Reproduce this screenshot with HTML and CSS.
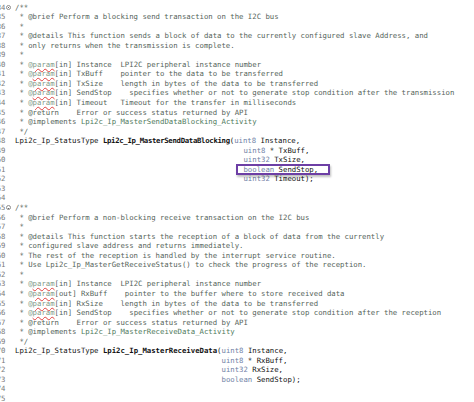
FILE: index.html
```html
<!DOCTYPE html>
<html>
<head>
<meta charset="utf-8">
<link rel="stylesheet" href="styles.css">
</head>
<body>
<div class="editor">
<div class="row"><span class="num">33</span><span class="fold"></span><span class="code"></span></div>
<div class="row"><span class="num">34</span><span class="fold"><i class="fm"></i></span><span class="code cm">/**</span></div>
<div class="row"><span class="num">35</span><span class="fold"></span><span class="code cm"> * <b class="tg">@brief</b> Perform a blocking send transaction on the I2C bus</span></div>
<div class="row"><span class="num">36</span><span class="fold"></span><span class="code cm"> *</span></div>
<div class="row"><span class="num">37</span><span class="fold"></span><span class="code cm"> * <b class="tg">@details</b> This function sends a block of data to the currently configured slave Address, and</span></div>
<div class="row"><span class="num">38</span><span class="fold"></span><span class="code cm"> * only returns when the transmission is complete.</span></div>
<div class="row"><span class="num">39</span><span class="fold"></span><span class="code cm"> *</span></div>
<div class="row"><span class="num">40</span><span class="fold"></span><span class="code cm"> * <b class="pt">@<u class="sp">param</u></b>[in] Instance  LPI2C peripheral instance number</span></div>
<div class="row"><span class="num">41</span><span class="fold"></span><span class="code cm"> * <b class="pt">@<u class="sp">param</u></b>[in] TxBuff    pointer to the data to be transferred</span></div>
<div class="row"><span class="num">42</span><span class="fold"></span><span class="code cm"> * <b class="pt">@<u class="sp">param</u></b>[in] TxSize    length in bytes of the data to be transferred</span></div>
<div class="row"><span class="num">43</span><span class="fold"></span><span class="code cm"> * <b class="pt">@<u class="sp">param</u></b>[in] SendStop    specifies whether or not to generate stop condition after the transmission</span></div>
<div class="row"><span class="num">44</span><span class="fold"></span><span class="code cm"> * <b class="pt">@<u class="sp">param</u></b>[in] Timeout   Timeout for the transfer in milliseconds</span></div>
<div class="row"><span class="num">45</span><span class="fold"></span><span class="code cm"> * <b class="tg">@return</b>    Error or success status returned by API</span></div>
<div class="row"><span class="num">46</span><span class="fold"></span><span class="code cm"> * <b class="tg">@implements</b> <span class="im">Lpi2c_Ip_MasterSendDataBlocking_Activity</span></span></div>
<div class="row"><span class="num">47</span><span class="fold"></span><span class="code cm"> */</span></div>
<div class="row"><span class="num">48</span><span class="fold"></span><span class="code">Lpi2c_Ip_StatusType <b class="fn tight">Lpi2c_Ip_MasterSendDataBlocking</b>(<span class="ty">uint8</span> Instance,</span></div>
<div class="row"><span class="num">49</span><span class="fold"></span><span class="code">                                                    <span class="ty">uint8</span> * TxBuff,</span></div>
<div class="row"><span class="num">50</span><span class="fold"></span><span class="code">                                                    <span class="ty">uint32</span> TxSize,</span></div>
<div class="row"><span class="num">51</span><span class="fold"></span><span class="code">                                                    <span class="hl"><span class="ty">boolean</span> SendStop,</span></span></div>
<div class="row"><span class="num">52</span><span class="fold"></span><span class="code">                                                    <span class="ty">uint32</span> Timeout);</span></div>
<div class="row"><span class="num">53</span><span class="fold"></span><span class="code"></span></div>
<div class="row"><span class="num">54</span><span class="fold"></span><span class="code"></span></div>
<div class="row"><span class="num">55</span><span class="fold"><i class="fm"></i></span><span class="code cm">/**</span></div>
<div class="row"><span class="num">56</span><span class="fold"></span><span class="code cm"> * <b class="tg">@brief</b> Perform a non-blocking receive transaction on the I2C bus</span></div>
<div class="row"><span class="num">57</span><span class="fold"></span><span class="code cm"> *</span></div>
<div class="row"><span class="num">58</span><span class="fold"></span><span class="code cm"> * <b class="tg">@details</b> This function starts the reception of a block of data from the currently</span></div>
<div class="row"><span class="num">59</span><span class="fold"></span><span class="code cm"> * configured slave address and returns immediately.</span></div>
<div class="row"><span class="num">60</span><span class="fold"></span><span class="code cm"> * The rest of the reception is handled by the interrupt service routine.</span></div>
<div class="row"><span class="num">61</span><span class="fold"></span><span class="code cm"> * Use Lpi2c_Ip_MasterGetReceiveStatus() to check the progress of the reception.</span></div>
<div class="row"><span class="num">62</span><span class="fold"></span><span class="code cm"> *</span></div>
<div class="row"><span class="num">63</span><span class="fold"></span><span class="code cm"> * <b class="pt">@<u class="sp">param</u></b>[in] Instance  LPI2C peripheral instance number</span></div>
<div class="row"><span class="num">64</span><span class="fold"></span><span class="code cm"> * <b class="pt">@<u class="sp">param</u></b>[out] RxBuff    pointer to the buffer where to store received data</span></div>
<div class="row"><span class="num">65</span><span class="fold"></span><span class="code cm"> * <b class="pt">@<u class="sp">param</u></b>[in] RxSize    length in bytes of the data to be transferred</span></div>
<div class="row"><span class="num">66</span><span class="fold"></span><span class="code cm"> * <b class="pt">@<u class="sp">param</u></b>[in] SendStop    specifies whether or not to generate stop condition after the reception</span></div>
<div class="row"><span class="num">67</span><span class="fold"></span><span class="code cm"> * <b class="tg">@return</b>    Error or success status returned by API</span></div>
<div class="row"><span class="num">68</span><span class="fold"></span><span class="code cm"> * <b class="tg">@implements</b> <span class="im">Lpi2c_Ip_MasterReceiveData_Activity</span></span></div>
<div class="row"><span class="num">69</span><span class="fold"></span><span class="code cm"> */</span></div>
<div class="row"><span class="num">70</span><span class="fold"></span><span class="code">Lpi2c_Ip_StatusType <b class="fn">Lpi2c_Ip_MasterReceiveData</b>(<span class="ty">uint8</span> Instance,</span></div>
<div class="row"><span class="num">71</span><span class="fold"></span><span class="code">                                               <span class="ty">uint8</span> * RxBuff,</span></div>
<div class="row"><span class="num">72</span><span class="fold"></span><span class="code">                                               <span class="ty">uint32</span> RxSize,</span></div>
<div class="row"><span class="num">73</span><span class="fold"></span><span class="code">                                               <span class="ty">boolean</span> SendStop);</span></div>
<div class="row"><span class="num">74</span><span class="fold"></span><span class="code"></span></div>
<div class="row"><span class="num">75</span><span class="fold"></span><span class="code"></span></div>
</div>
</body>
</html>
```

FILE: styles.css
```css
html, body {
  margin: 0;
  padding: 0;
  background: #ffffff;
}
body {
  width: 474px;
  height: 402px;
  overflow: hidden;
}
.editor {
  margin-top: -7px;
  font-family: "DejaVu Sans Mono", "Liberation Mono", monospace;
  font-size: 7.3px;
}
.row {
  display: flex;
  height: 9.55px;
  line-height: 9.55px;
}
.num {
  flex: none;
  width: 5.5px;
  display: flex;
  justify-content: flex-end;
  overflow: hidden;
  color: #7a7a7a;
  white-space: pre;
}
.fold {
  flex: none;
  width: 9.5px;
  display: flex;
  align-items: center;
  padding-left: 0.5px;
  box-sizing: border-box;
}
.fm {
  position: relative;
  width: 5px;
  height: 5px;
  border: 1px solid #8c8c8c;
  border-radius: 50%;
  box-sizing: border-box;
}
.fm::after {
  content: "";
  position: absolute;
  left: 1px;
  right: 1px;
  top: 1.5px;
  height: 1px;
  background: #6a6a6a;
}
.code {
  white-space: pre;
  color: #111;
}
.cm {
  color: #55645a;
}
.tg {
  font-weight: normal;
  color: #55645a;
}
.pt {
  font-weight: normal;
  color: #7f9a88;
}
.sp {
  text-decoration: underline wavy #e04040;
  text-decoration-thickness: 1px;
  text-underline-offset: 1px;
}
.im {
  color: #4f7a5c;
}
.fn {
  font-weight: bold;
}
.tight {
  letter-spacing: -0.3px;
}
.ty {
  color: #6f7fa6;
}
.hl {
  position: relative;
}
.hl::before {
  content: "";
  position: absolute;
  left: -7px;
  right: -12px;
  top: -1px;
  bottom: -1px;
  border: 2px solid #6d3fa5;
  box-shadow: 1px 2px 2px rgba(0, 0, 0, 0.25);
}
```
